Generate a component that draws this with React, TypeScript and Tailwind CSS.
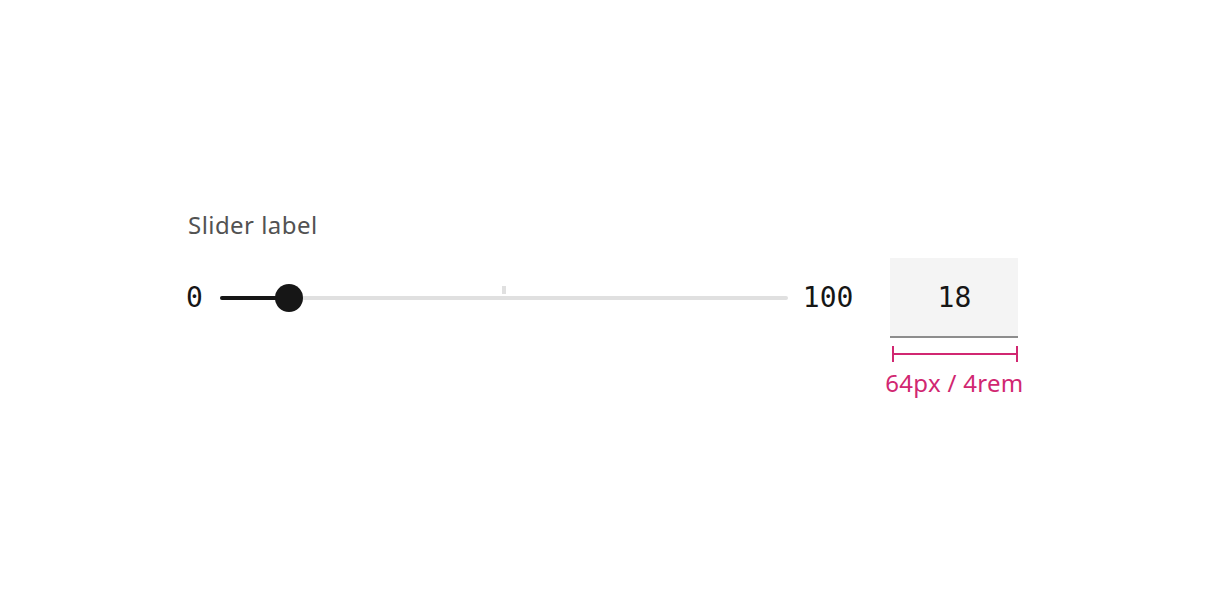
import React from 'react';

export default function App() {
  const min = 0;
  const max = 100;
  const value = 18;

  return (
    <div className="w-[1216px] h-[608px] bg-white pt-[209px] pl-[186px] font-['Noto_Sans',sans-serif]">
      {/* Label */}
      <div className="ml-[2px] text-[24px] leading-[32px] tracking-[0.45px] text-[#525252]">Slider label</div>

      {/* Slider row */}
      <div className="flex items-start mt-[17px]">
        <div className="h-[80px] flex items-center text-[28px] text-[#161616] font-['DejaVu_Sans_Mono',monospace]">
          {min}
        </div>

        <div className="h-[80px] flex items-center ml-[17px]">
          <div className="relative w-[568px] h-[4px] rounded-full bg-[#e0e0e0]">
            <div className="h-full w-[69px] rounded-full bg-[#161616]" />
            {/* midpoint tick */}
            <div className="absolute left-[282px] top-[-10px] w-[4px] h-[8px] bg-[#e0e0e0]" />
            {/* thumb */}
            <div className="absolute left-[55px] top-[-12px] w-[28px] h-[28px] rounded-full bg-[#161616]" />
          </div>
        </div>

        <div className="h-[80px] flex items-center ml-[15px] text-[28px] text-[#161616] font-['DejaVu_Sans_Mono',monospace]">
          {max}
        </div>

        {/* Number input + spec annotation */}
        <div className="ml-[37px] w-[128px] flex flex-col items-center">
          <div className="w-[128px] h-[80px] bg-[#f4f4f4] border-b-2 border-[#8d8d8d] flex items-center justify-center pt-[2px] text-[28px] text-[#161616] font-['DejaVu_Sans_Mono',monospace]">
            {value}
          </div>
          <div className="mt-[8px] ml-[2px] w-[126px] h-[16px] border-x-2 border-[#d12771] flex items-center">
            <div className="w-full h-[2px] bg-[#d12771]" />
          </div>
          <div className="mt-[5px] text-[24px] leading-[32px] tracking-[0.3px] whitespace-nowrap text-[#d12771]">64px / 4rem</div>
        </div>
      </div>
    </div>
  );
}
